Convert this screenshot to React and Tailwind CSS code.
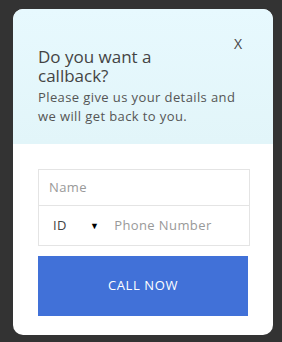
import React from 'react';

const App = () => {
    return (
        <div
            className="w-[282px] h-[342px] bg-[#333333] pt-[9px] pl-[13px]"
            style={{ fontFamily: '"Open Sans", "Liberation Sans", sans-serif' }}
        >
            <div className="w-[260px] h-[326px] bg-white rounded-[10px] overflow-hidden flex flex-col">
                <div className="relative h-[135px] bg-gradient-to-b from-[#e7f9fe] to-[#e2f5f9] px-[25px] pt-[38px]">
                    <button className="absolute top-[24px] right-[31px] text-[14px] text-[#444]">X</button>
                    <h2 className="text-[17px] leading-[19px] text-[#444] w-[140px]">Do you want a callback?</h2>
                    <p className="mt-[3px] text-[13px] leading-[19px] tracking-[0.4px] text-[#555] w-[210px]">
                        Please give us your details and we will get back to you.
                    </p>
                </div>
                <div className="pl-[25px] pt-[25px] tracking-[0.4px]">
                    <div className="w-[212px] border border-[#e4e4e4] h-[37px] flex items-center px-[10px] text-[13px] text-[#999]">
                        Name
                    </div>
                    <div className="w-[212px] border border-t-0 border-[#e4e4e4] h-[40px] flex items-center text-[13px]">
                        <span className="ml-[14px] text-[#444]">ID</span>
                        <span className="ml-[23px] text-[9px] text-black">▼</span>
                        <span className="ml-[15px] text-[#999]">Phone Number</span>
                    </div>
                    <button className="mt-[10px] w-[210px] h-[60px] bg-[#4171d8] text-white text-[13px] tracking-[0.6px]">
                        CALL NOW
                    </button>
                </div>
            </div>
        </div>
    );
};

export default App;
